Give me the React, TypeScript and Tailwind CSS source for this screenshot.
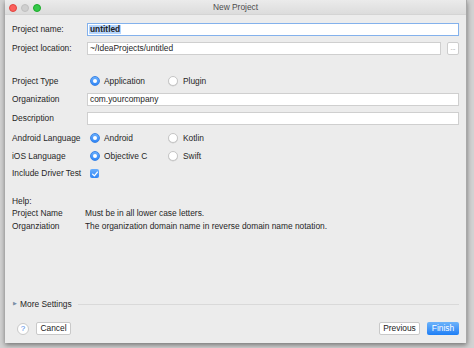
import React from "react";

const font = "font-['Liberation_Sans',Arial,sans-serif]";

function Radio({ on }: { on?: boolean }) {
  return on ? (
    <span className="flex h-[10px] w-[10px] items-center justify-center rounded-full bg-gradient-to-b from-[#69aefc] to-[#2f86f6] border border-[#3b84e6]">
      <span className="h-[4px] w-[4px] rounded-full bg-white" />
    </span>
  ) : (
    <span className="h-[10px] w-[10px] rounded-full bg-white border border-[#c6c6c6] shadow-[0_0.5px_0.5px_rgba(0,0,0,0.12)]" />
  );
}

function Choice({ a, b }: { a: string; b: string }) {
  return (
    <div className="flex items-center pl-[3px]">
      <div className="flex w-[78px] items-center gap-[4px]">
        <Radio on />
        <span>{a}</span>
      </div>
      <div className="flex items-center gap-[5px]">
        <Radio />
        <span>{b}</span>
      </div>
    </div>
  );
}

function Row({ label, children, className = "" }: { label: string; children: React.ReactNode; className?: string }) {
  return (
    <div className={`grid grid-cols-[75px_1fr] items-center h-[13px] ${className}`}>
      <span>{label}</span>
      {children}
    </div>
  );
}

function Field({ value = "" }: { value?: string }) {
  return (
    <div className="h-[13px] bg-white border border-[#cfcfcf] flex items-center pl-[2px] leading-none">
      {value}
    </div>
  );
}

export default function App() {
  return (
    <div className={`h-[348px] w-[474px] overflow-hidden bg-[#d2d2d2] pl-[5px] ${font} text-[8.4px] text-[#262626]`}>
      <div className="flex h-[343px] w-[462px] flex-col bg-[#ececec] shadow-[0_2px_5px_rgba(0,0,0,0.45)] border-r border-[#a8a8a8]">
        {/* title bar */}
        <div className="relative flex h-[15px] items-center justify-center border-b border-[#d4d4d4] bg-gradient-to-b from-[#ebebeb] to-[#dcdcdc]">
          <div className="absolute left-[4px] top-[4px] flex gap-[4px]">
            <span className="h-[8px] w-[8px] rounded-full bg-[#fc605c] border border-[#e0443e]" />
            <span className="h-[8px] w-[8px] rounded-full bg-[#cfcfcf] border border-[#c0c0c0]" />
            <span className="h-[8px] w-[8px] rounded-full bg-[#34c84a] border border-[#1aab29]" />
          </div>
          <span className="text-[#4d4d4d] text-[8.4px]">New Project</span>
        </div>

        <div className="flex flex-1 flex-col px-[7px]">
          <Row label="Project name:" className="mt-[8px]">
            <div className="h-[13px] bg-white border-[1.5px] border-[#83b1ec] flex items-center pl-[1px] leading-none">
              <span className="bg-[#b5d5fd] px-[1px] font-bold text-[#1d1d1d]">untitled</span>
            </div>
          </Row>
          <div className="mt-[6px] grid grid-cols-[75px_1fr_18px] items-center h-[13px]">
            <span>Project location:</span>
            <Field value="~/IdeaProjects/untitled" />
            <div className="ml-auto h-[13px] w-[12px] bg-white border border-[#cdcdcd] rounded-[2px] flex items-center justify-center text-[6px] leading-none text-[#555] pb-[2px]">
              ...
            </div>
          </div>

          <Row label="Project Type" className="mt-[20px]">
            <Choice a="Application" b="Plugin" />
          </Row>
          <Row label="Organization" className="mt-[5px]">
            <Field value="com.yourcompany" />
          </Row>
          <Row label="Description" className="mt-[6px]">
            <Field />
          </Row>
          <Row label="Android Language" className="mt-[7px]">
            <Choice a="Android" b="Kotlin" />
          </Row>
          <Row label="iOS Language" className="mt-[5px]">
            <Choice a="Objective C" b="Swift" />
          </Row>
          <Row label="Include Driver Test" className="mt-[4px]">
            <div className="pl-[3px]">
              <span className="flex h-[9px] w-[9px] items-center justify-center rounded-[2px] bg-gradient-to-b from-[#69aefc] to-[#2f86f6]">
                <svg viewBox="0 0 10 10" className="h-[8px] w-[8px]">
                  <path d="M2 5.2 L4.2 7.4 L8 2.6" fill="none" stroke="white" strokeWidth="1.6" strokeLinecap="round" strokeLinejoin="round" />
                </svg>
              </span>
            </div>
          </Row>

          <div className="mt-[15px] h-[12px] flex items-center">Help:</div>
          <div className="grid grid-cols-[73px_1fr] h-[13px] items-center">
            <span>Project Name</span>
            <span>Must be in all lower case letters.</span>
          </div>
          <div className="grid grid-cols-[73px_1fr] h-[13px] items-center">
            <span>Organziation</span>
            <span>The organization domain name in reverse domain name notation.</span>
          </div>

          <div className="mt-auto flex h-[12px] items-center">
            <span className="ml-[1px] text-[5px] text-[#7a8fa6]">▶</span>
            <span className="ml-[3px]">More Settings</span>
            <div className="ml-[6px] h-px flex-1 bg-[#d9d9d9]" />
          </div>

          <div className="mt-[12px] mb-[8px] flex h-[13px] items-center">
            <span className="ml-[5px] flex h-[12px] w-[12px] items-center justify-center rounded-full bg-white border border-[#c9c9c9] text-[8px] text-[#3d86e6]">?</span>
            <button className="ml-[7px] h-[13px] w-[35px] rounded-[2px] bg-white border border-[#c9c9c9] text-[8.4px] leading-none text-[#222]">Cancel</button>
            <button className="ml-auto h-[13px] w-[41px] rounded-[2px] bg-white border border-[#c9c9c9] text-[8.4px] leading-none text-[#222]">Previous</button>
            <button className="ml-[7px] h-[13px] w-[32px] rounded-[2px] bg-gradient-to-b from-[#6cb3fa] to-[#1b7ef5] text-[8.4px] leading-none text-white">Finish</button>
          </div>
        </div>
      </div>
    </div>
  );
}
